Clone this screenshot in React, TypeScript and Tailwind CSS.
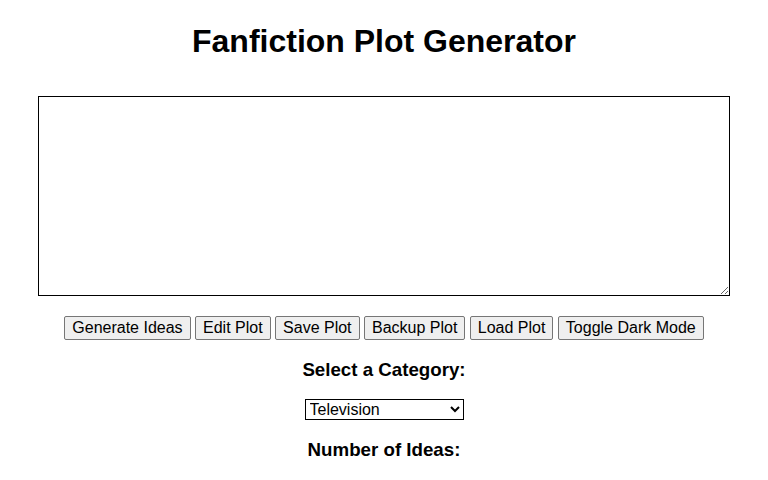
import { useState } from "react";

const actions = ["Generate Ideas", "Edit Plot", "Save Plot", "Backup Plot", "Load Plot", "Toggle Dark Mode"];

export default function App() {
  const [plot, setPlot] = useState("");
  const [category, setCategory] = useState("Television");

  return (
    <div className="min-h-[480px] bg-white text-black font-['Liberation_Sans',Arial,sans-serif] flex flex-col items-center">
      <h1 className="mt-[23px] text-[32px] leading-[37px] font-bold">Fanfiction Plot Generator</h1>

      <textarea
        value={plot}
        onChange={e => setPlot(e.target.value)}
        className="mt-[36px] w-[692px] h-[200px] border border-black p-[2px] text-[13px] block"
      />

      <div className="mt-[20px] flex gap-[4.45px]">
        {actions.map(a => (
          <button
            key={a}
            className="h-[24px] px-[7px] bg-[#efefef] border border-[#767676] rounded-[2px] text-[16px] leading-[18px]"
          >
            {a}
          </button>
        ))}
      </div>

      <h3 className="mt-[19px] text-[18.72px] leading-[22px] font-bold">Select a Category:</h3>

      <select
        value={category}
        onChange={e => setCategory(e.target.value)}
        className="mt-[18px] w-[159px] h-[21px] border border-black text-[16px] bg-white"
      >
        <option>Television</option>
        <option>Movies</option>
        <option>Books</option>
        <option>Anime</option>
        <option>Video Games</option>
      </select>

      <h3 className="mt-[19px] text-[18.72px] leading-[22px] font-bold">Number of Ideas:</h3>
    </div>
  );
}
